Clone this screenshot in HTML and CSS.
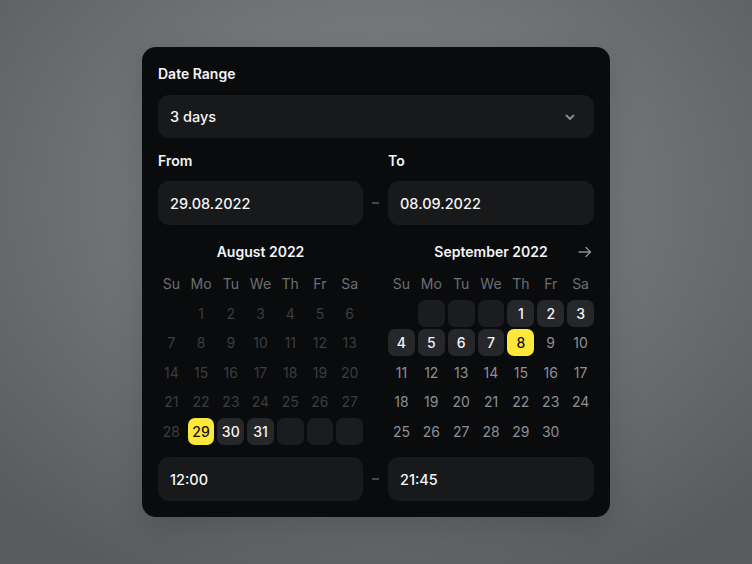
FILE: index.html
```html
<!DOCTYPE html>
<html>
<head>
<meta charset="utf-8">
<link rel="stylesheet" href="styles.css">
</head>
<body>
<div class="card">
  <div class="label">Date Range</div>
  <div class="field select">
    <span>3 days</span>
    <svg class="chev" width="12" height="12" viewBox="0 0 12 12"><path d="M2.5 4.5 L6 8 L9.5 4.5" fill="none" stroke="currentColor" stroke-width="1.8" stroke-linecap="round" stroke-linejoin="round"/></svg>
  </div>
  <div class="pair labels">
    <div class="label">From</div>
    <div></div>
    <div class="label">To</div>
  </div>
  <div class="pair">
    <div class="field">29.08.2022</div>
    <div class="dash"></div>
    <div class="field">08.09.2022</div>
  </div>
  <div class="pair cals">
    <div class="cal">
      <div class="title">August 2022</div>
      <div class="grid">
        <div class="hd">Su</div><div class="hd">Mo</div><div class="hd">Tu</div><div class="hd">We</div><div class="hd">Th</div><div class="hd">Fr</div><div class="hd">Sa</div>
        <div></div><div class="d off">1</div><div class="d off">2</div><div class="d off">3</div><div class="d off">4</div><div class="d off">5</div><div class="d off">6</div>
        <div class="d off">7</div><div class="d off">8</div><div class="d off">9</div><div class="d off">10</div><div class="d off">11</div><div class="d off">12</div><div class="d off">13</div>
        <div class="d off">14</div><div class="d off">15</div><div class="d off">16</div><div class="d off">17</div><div class="d off">18</div><div class="d off">19</div><div class="d off">20</div>
        <div class="d off">21</div><div class="d off">22</div><div class="d off">23</div><div class="d off">24</div><div class="d off">25</div><div class="d off">26</div><div class="d off">27</div>
        <div class="d off">28</div><div class="d sel">29</div><div class="d rng">30</div><div class="d rng">31</div><div class="d empty"></div><div class="d empty"></div><div class="d empty"></div>
      </div>
    </div>
    <div></div>
    <div class="cal">
      <div class="title">September 2022
        <svg class="arrow" width="14" height="12" viewBox="0 0 14 12"><path d="M1 6 H12.5 M8 1.5 L12.5 6 L8 10.5" fill="none" stroke="currentColor" stroke-width="1.4" stroke-linecap="round" stroke-linejoin="round"/></svg>
      </div>
      <div class="grid">
        <div class="hd">Su</div><div class="hd">Mo</div><div class="hd">Tu</div><div class="hd">We</div><div class="hd">Th</div><div class="hd">Fr</div><div class="hd">Sa</div>
        <div></div><div class="d empty"></div><div class="d empty"></div><div class="d empty"></div><div class="d rng">1</div><div class="d rng">2</div><div class="d rng">3</div>
        <div class="d rng">4</div><div class="d rng">5</div><div class="d rng">6</div><div class="d rng">7</div><div class="d sel">8</div><div class="d">9</div><div class="d">10</div>
        <div class="d">11</div><div class="d">12</div><div class="d">13</div><div class="d">14</div><div class="d">15</div><div class="d">16</div><div class="d">17</div>
        <div class="d">18</div><div class="d">19</div><div class="d">20</div><div class="d">21</div><div class="d">22</div><div class="d">23</div><div class="d">24</div>
        <div class="d">25</div><div class="d">26</div><div class="d">27</div><div class="d">28</div><div class="d">29</div><div class="d">30</div><div></div>
      </div>
    </div>
  </div>
  <div class="pair times">
    <div class="field">12:00</div>
    <div class="dash"></div>
    <div class="field">21:45</div>
  </div>
</div>
</body>
</html>
```

FILE: styles.css
```css
* { box-sizing: border-box; }
html, body { margin: 0; height: 100%; }
body {
  width: 752px;
  height: 564px;
  display: flex;
  align-items: center;
  justify-content: center;
  background: radial-gradient(ellipse 70% 75% at 50% 35%, #828385 0%, #737476 45%, #5a5b5d 100%);
  font-family: Inter, "Noto Sans", sans-serif;
  color: #f4f4f5;
}
.card {
  width: 468px;
  height: 470px;
  background: #0a0b0d;
  border-radius: 14px;
  padding: 16px;
  display: flex;
  flex-direction: column;
  box-shadow: 0 10px 30px rgba(0,0,0,0.15);
}
.label {
  font-size: 14px;
  font-weight: 600;
  line-height: 22px;
  color: #f4f4f5;
}
.field {
  height: 44px;
  background: #18191b;
  border-radius: 11px;
  padding: 0 12px;
  display: flex;
  align-items: center;
  font-size: 14.5px;
  font-weight: 500;
  color: #f4f4f5;
}
.select { margin-top: 10px; justify-content: space-between; }
.chev { color: #8b8d92; margin-right: 6px; }
.pair {
  display: grid;
  grid-template-columns: 205px 1fr 206px;
  align-items: center;
}
.labels { margin-top: 12px; }
.labels + .pair { margin-top: 9px; }
.dash { width: 7px; height: 1.5px; background: #45474b; justify-self: center; }
.cals { margin-top: 16px; align-items: start; }
.title {
  position: relative;
  text-align: center;
  font-size: 14px;
  font-weight: 600;
  line-height: 22px;
  margin-bottom: 7px;
}
.arrow { position: absolute; right: 2px; top: 5px; color: #8b8d92; }
.grid {
  display: grid;
  grid-template-columns: repeat(7, 1fr);
  grid-auto-rows: 27px;
  gap: 2.6px 3px;
}
.grid > div {
  display: flex;
  align-items: center;
  justify-content: center;
  font-size: 14px;
  border-radius: 7px;
}
.hd { color: #6d6f74; }
.d { color: #8d8f94; }
.d.off { color: #3b3d41; }
.d.rng { background: #26272b; color: #f4f4f5; font-weight: 500; }
.d.empty { background: #1b1c1f; }
.d.sel { background: #fde73a; color: #111; font-weight: 500; }
.times { margin-top: 12px; }
```
